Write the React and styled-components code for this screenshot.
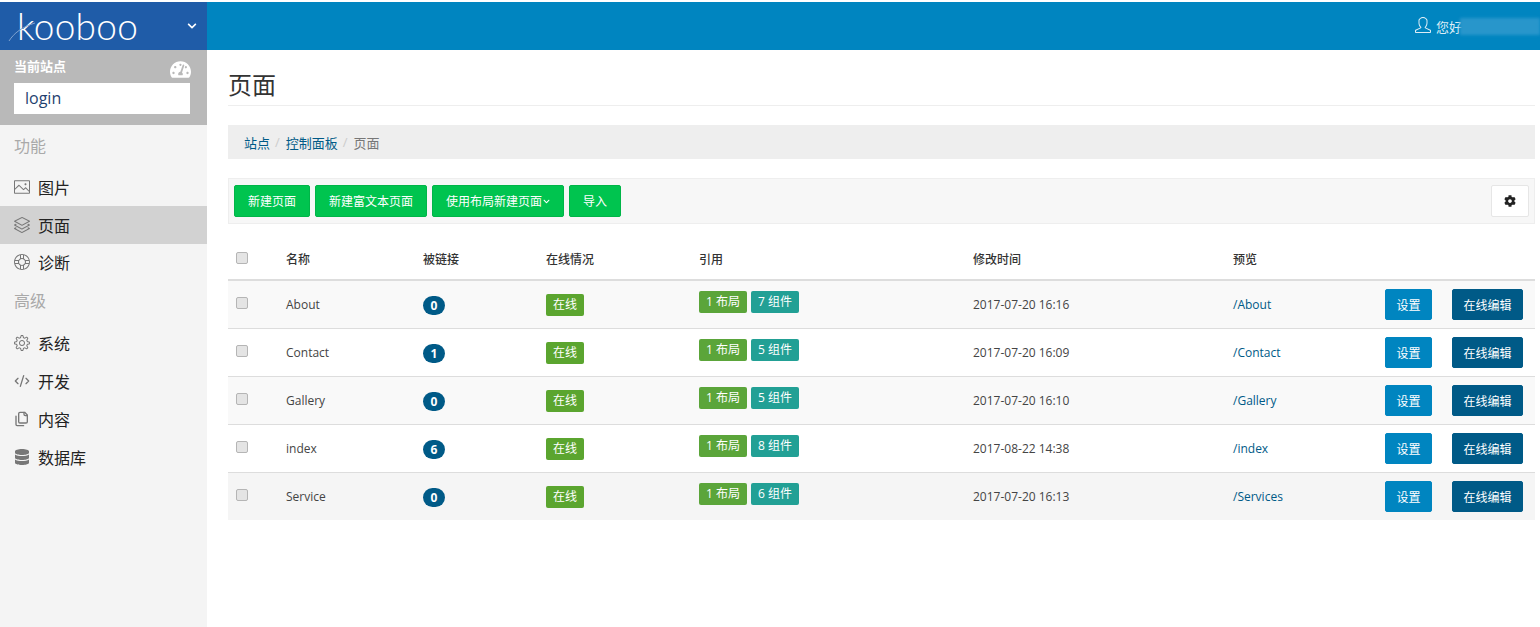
import React from "react";
import styled, {createGlobalStyle} from "styled-components";
import {FaChevronDown, FaCog, FaDatabase, FaTachometerAlt} from "react-icons/fa";
import {SlPicture, SlLayers, SlSupport, SlSettings, SlUser} from "react-icons/sl";
import {LuCodeXml, LuFiles} from "react-icons/lu";

const GlobalStyle = createGlobalStyle`
  html, body {
    margin: 0;
    padding: 0;
    background: #fff;
    font-family: "Open Sans", "Noto Sans CJK SC", sans-serif;
    color: #333;
  }
  * {
    box-sizing: border-box;
  }
`;

const Page = styled.div`
  width: 1540px;
  height: 627px;
  padding-top: 2px;
  display: flex;
  flex-direction: column;
  overflow: hidden;
`;

const TopBar = styled.header`
  height: 48px;
  flex: none;
  background: #0085c0;
  display: flex;
  align-items: center;
`;

const Brand = styled.div`
  width: 207px;
  height: 48px;
  background: #1f5ca8;
  display: flex;
  align-items: center;
  justify-content: space-between;
  padding: 0 10px 0 17px;
  color: #fff;
`;

const LogoText = styled.span`
  display: flex;
  align-items: center;
  font-family: "Lato", sans-serif;
  font-weight: 300;
  font-size: 37px;
  letter-spacing: 0.3px;
  line-height: 48px;
  position: relative;

  svg {
    position: absolute;
    left: -9px;
    top: 16px;
  }
`;

const UserArea = styled.div`
  margin-left: auto;
  display: flex;
  align-items: center;
  color: #dcedf6;
  font-size: 13px;
  width: 125px;
  gap: 5px;

  svg {
    font-size: 16px;
    margin-top: -2px;
  }
`;

const BlurredName = styled.span`
  width: 80px;
  height: 17px;
  margin-left: -7px;
  background: #2896cb;
  filter: blur(1.5px);
`;

const Body = styled.div`
  flex: 1;
  display: flex;
  min-height: 0;
`;

const Sidebar = styled.aside`
  width: 207px;
  flex: none;
  background: #f4f4f4;
`;

const SiteBlock = styled.div`
  height: 75px;
  background: #b9b9b9;
  padding: 6px 17px 0 14px;
`;

const SiteHead = styled.div`
  display: flex;
  justify-content: space-between;
  color: #fff;
  font-size: 13px;
  font-weight: 700;
  height: 27px;
  line-height: 20px;

  svg {
    font-size: 21px;
    margin-top: 3px;
    margin-right: -1px;
  }
`;

const SiteInput = styled.div`
  width: 176px;
  height: 31px;
  background: #fff;
  color: #1f3f6f;
  font-size: 16px;
  line-height: 31px;
  padding-left: 11px;
`;

const GroupTitle = styled.div`
  height: 43px;
  padding-left: 14px;
  font-size: 16px;
  line-height: 42px;
  color: #a9a9a9;
`;

const NavItem = styled.div`
  height: ${(props) => props.$h || 38}px;
  display: flex;
  align-items: center;
  gap: 8px;
  padding-left: 14px;
  font-size: 16px;
  color: #222;
  background: ${(props) => (props.$active ? "#d2d2d2" : "transparent")};

  svg {
    width: 16px;
    height: 16px;
    color: #777;
    flex: none;
  }
`;

const Main = styled.main`
  flex: 1;
  padding: 0 5px 0 21px;
`;

const Title = styled.h1`
  margin: 0;
  height: 56px;
  padding-top: 17px;
  border-bottom: 1px solid #eee;
  font-size: 24px;
  font-weight: 400;
  line-height: 36px;
  color: #333;
`;

const Breadcrumb = styled.div`
  margin-top: 19px;
  height: 34px;
  background: #eee;
  padding-left: 16px;
  display: flex;
  align-items: center;
  font-size: 13px;
  color: #777;

  a {
    color: #005a87;
  }

  i {
    font-style: normal;
    color: #ccc;
    margin: 0 6px 0 5px;
  }
`;

const Toolbar = styled.div`
  margin-top: 19px;
  height: 46px;
  background: #f7f7f7;
  border: 1px solid #eee;
  padding: 6px 5px;
  display: flex;
  gap: 5px;
`;

const GreenButton = styled.button`
  height: 32px;
  padding: 0 13px;
  border: 1px solid #00b548;
  border-radius: 2px;
  background: #00c44f;
  color: #fff;
  font: inherit;
  font-size: 12px;
  display: flex;
  align-items: center;

  svg {
    font-size: 7px;
    margin-left: 1px;
  }
`;

const GearButton = styled.button`
  margin-left: auto;
  width: 38px;
  height: 32px;
  border: 1px solid #e6e6e6;
  border-radius: 2px;
  background: #fff;
  color: #222;
  display: flex;
  align-items: center;
  justify-content: center;
  font-size: 12px;
`;

const Table = styled.table`
  margin-top: 15px;
  width: 1307px;
  table-layout: fixed;
  border-collapse: collapse;
  font-size: 12px;
  color: #444;
`;

const HeadCell = styled.th`
  height: 41px;
  padding: 0 8px;
  text-align: left;
  font-weight: 500;
  color: #333;
  border-bottom: 2px solid #ddd;
`;

const Row = styled.tr`
  background: ${(props) => props.$bg};
  border-bottom: 1px solid #ddd;
  &:last-child {
    border-bottom: none;
  }
`;

const Cell = styled.td`
  height: 48px;
  padding: 0 8px;
  vertical-align: middle;
`;

const Check = styled.span`
  display: block;
  width: 12px;
  height: 12px;
  margin-top: -3px;
  border: 1px solid #b5b5b5;
  border-radius: 2px;
  background: #e4e4e4;
`;

const Count = styled.span`
  display: inline-block;
  min-width: 22px;
  height: 19px;
  border-radius: 10px;
  background: #005a87;
  color: #fff;
  font-weight: 700;
  font-size: 12px;
  line-height: 19px;
  text-align: center;
  margin-top: 2px;
`;

const Tag = styled.span`
  display: inline-block;
  height: 22px;
  padding: 0 7px;
  border-radius: 2px;
  background: ${(props) => props.$color};
  color: #fff;
  font-size: 12px;
  line-height: 22px;
  margin-right: 4px;
`;

const RefTags = styled.div`
  display: flex;
  margin-top: -5px;
`;

const StatusTag = styled(Tag)`
  margin-top: 2px;
  vertical-align: middle;
`;

const PreviewLink = styled.span`
  color: #005a87;
`;

const Actions = styled.div`
  display: flex;
  gap: 20px;
  margin-top: 1px;
`;

const RowButton = styled.button`
  height: 31px;
  width: ${(props) => props.$w}px;
  padding: 0;
  border: 1px solid ${(props) => props.$color};
  border-radius: 2px;
  background: ${(props) => props.$color};
  color: #fff;
  font: inherit;
  font-size: 12px;
`;

const widths = [50, 137, 123, 153, 274, 260, 152, 158];
const heads = ["", "名称", "被链接", "在线情况", "引用", "修改时间", "预览", ""];

const pages = [
    {name: "About", links: 0, layouts: 1, parts: 7, time: "2017-07-20 16:16", url: "/About", bg: "#f9f9f9"},
    {name: "Contact", links: 1, layouts: 1, parts: 5, time: "2017-07-20 16:09", url: "/Contact", bg: "#fff"},
    {name: "Gallery", links: 0, layouts: 1, parts: 5, time: "2017-07-20 16:10", url: "/Gallery", bg: "#f9f9f9"},
    {name: "index", links: 6, layouts: 1, parts: 8, time: "2017-08-22 14:38", url: "/index", bg: "#fff"},
    {name: "Service", links: 0, layouts: 1, parts: 6, time: "2017-07-20 16:13", url: "/Services", bg: "#f5f5f5"},
];

const Swoosh = () => (
    <svg width="30" height="24" viewBox="0 0 30 24" fill="none">
        <path d="M1 23C6 15 14 9 27 5" stroke="#7fa3d0" strokeWidth="1"/>
    </svg>
);

const App = () => {
    return (
        <Page>
            <GlobalStyle/>
            <TopBar>
                <Brand>
                    <LogoText><Swoosh/>kooboo</LogoText>
                    <FaChevronDown size={10}/>
                </Brand>
                <UserArea>
                    <SlUser/>
                    <span>您好</span>
                    <BlurredName/>
                </UserArea>
            </TopBar>
            <Body>
                <Sidebar>
                    <SiteBlock>
                        <SiteHead>
                            <span>当前站点</span>
                            <FaTachometerAlt/>
                        </SiteHead>
                        <SiteInput>login</SiteInput>
                    </SiteBlock>
                    <GroupTitle>功能</GroupTitle>
                    <NavItem><SlPicture/>图片</NavItem>
                    <NavItem $active><SlLayers/>页面</NavItem>
                    <NavItem $h={36}><SlSupport/>诊断</NavItem>
                    <GroupTitle>高级</GroupTitle>
                    <NavItem $h={39}><SlSettings/>系统</NavItem>
                    <NavItem><LuCodeXml/>开发</NavItem>
                    <NavItem><LuFiles/>内容</NavItem>
                    <NavItem $h={37}><FaDatabase/>数据库</NavItem>
                </Sidebar>
                <Main>
                    <Title>页面</Title>
                    <Breadcrumb>
                        <a>站点</a><i>/</i><a>控制面板</a><i>/</i><span>页面</span>
                    </Breadcrumb>
                    <Toolbar>
                        <GreenButton>新建页面</GreenButton>
                        <GreenButton>新建富文本页面</GreenButton>
                        <GreenButton>使用布局新建页面<FaChevronDown/></GreenButton>
                        <GreenButton>导入</GreenButton>
                        <GearButton><FaCog/></GearButton>
                    </Toolbar>
                    <Table>
                        <colgroup>
                            {widths.map((w, i) => <col key={i} width={w}/>)}
                        </colgroup>
                        <thead>
                            <tr>
                                {heads.map((h, i) => (
                                    <HeadCell key={i}>{i === 0 ? <Check/> : h}</HeadCell>
                                ))}
                            </tr>
                        </thead>
                        <tbody>
                            {pages.map((p) => (
                                <Row key={p.name} $bg={p.bg}>
                                    <Cell><Check/></Cell>
                                    <Cell>{p.name}</Cell>
                                    <Cell><Count>{p.links}</Count></Cell>
                                    <Cell><StatusTag $color="#5ba52f">在线</StatusTag></Cell>
                                    <Cell>
                                        <RefTags>
                                            <Tag $color="#5ba53a">{p.layouts} 布局</Tag>
                                            <Tag $color="#22a095">{p.parts} 组件</Tag>
                                        </RefTags>
                                    </Cell>
                                    <Cell>{p.time}</Cell>
                                    <Cell><PreviewLink>{p.url}</PreviewLink></Cell>
                                    <Cell>
                                        <Actions>
                                            <RowButton $w={47} $color="#0085c0">设置</RowButton>
                                            <RowButton $w={71} $color="#005a87">在线编辑</RowButton>
                                        </Actions>
                                    </Cell>
                                </Row>
                            ))}
                        </tbody>
                    </Table>
                </Main>
            </Body>
        </Page>
    );
};

export default App;
